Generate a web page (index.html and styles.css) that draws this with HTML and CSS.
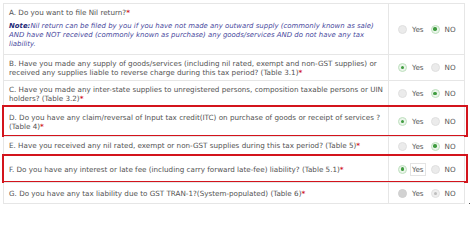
FILE: index.html
```html
<!DOCTYPE html>
<html>
<head>
<meta charset="utf-8">
<link rel="stylesheet" href="styles.css">
</head>
<body>
<div class="table">
  <div class="row row-a">
    <div class="q">
      <div class="qt">A. Do you want to file Nil return?<span class="req">*</span></div>
      <div class="note"><b>Note:</b>Nil return can be filed by you if you have not made any outward supply (commonly known as sale)<br>AND have NOT received (commonly known as purchase) any goods/services AND do not have any tax<br>liability.</div>
    </div>
    <div class="opts">
      <span class="radio"></span><span class="lbl">Yes</span>
      <span class="radio on"></span><span class="lbl">NO</span>
    </div>
  </div>
  <div class="row row-b">
    <div class="q"><div class="qt">B. Have you made any supply of goods/services (including nil rated, exempt and non-GST supplies) or<br>received any supplies liable to reverse charge during this tax period? (Table 3.1)<span class="req">*</span></div></div>
    <div class="opts">
      <span class="radio on"></span><span class="lbl">Yes</span>
      <span class="radio"></span><span class="lbl">NO</span>
    </div>
  </div>
  <div class="row row-c">
    <div class="q"><div class="qt">C. Have you made any inter-state supplies to unregistered persons, composition taxable persons or UIN<br>holders? (Table 3.2)<span class="req">*</span></div></div>
    <div class="opts">
      <span class="radio"></span><span class="lbl">Yes</span>
      <span class="radio on"></span><span class="lbl">NO</span>
    </div>
  </div>
  <div class="row row-d flagged">
    <div class="q"><div class="qt">D. Do you have any claim/reversal of Input tax credit(ITC) on purchase of goods or receipt of services ?<br>(Table 4)<span class="req">*</span></div></div>
    <div class="opts">
      <span class="radio on"></span><span class="lbl">Yes</span>
      <span class="radio"></span><span class="lbl">NO</span>
    </div>
  </div>
  <div class="row row-e">
    <div class="q"><div class="qt">E. Have you received any nil rated, exempt or non-GST supplies during this tax period? (Table 5)<span class="req">*</span></div></div>
    <div class="opts">
      <span class="radio"></span><span class="lbl">Yes</span>
      <span class="radio on"></span><span class="lbl">NO</span>
    </div>
  </div>
  <div class="row row-f flagged">
    <div class="q"><div class="qt">F. Do you have any interest or late fee (including carry forward late-fee) liability? (Table 5.1)<span class="req">*</span></div></div>
    <div class="opts">
      <span class="radio on"></span><span class="lbl focus">Yes</span>
      <span class="radio"></span><span class="lbl">NO</span>
    </div>
  </div>
  <div class="row row-g">
    <div class="q"><div class="qt">G. Do you have any tax liability due to GST TRAN-1?(System-populated) (Table 6)<span class="req">*</span></div></div>
    <div class="opts">
      <span class="radio dis"></span><span class="lbl">Yes</span>
      <span class="radio dis-on"></span><span class="lbl">NO</span>
    </div>
  </div>
  <span class="scrollmark"></span>
</div>
</body>
</html>
```

FILE: styles.css
```css
html, body {
  margin: 0;
  padding: 0;
  background: #ffffff;
}
body {
  font-family: "DejaVu Sans", Verdana, sans-serif;
  font-size: 7.2px;
  color: #525252;
}
.table {
  position: relative;
  margin: 3px 0 0 3px;
  width: 462px;
  border: 1px solid #e6e6e6;
  box-sizing: border-box;
}
.row {
  position: relative;
  display: flex;
  border-top: 1px solid #e6e6e6;
}
.row:first-child {
  border-top: none;
}
.q {
  flex: 1;
  padding: 4px 5px 3px 5px;
  line-height: 9px;
}
.qt {
  white-space: nowrap;
}
.req {
  color: #d0121b;
  font-weight: bold;
}
.note {
  margin-top: 5px;
  font-size: 6.95px;
  font-style: italic;
  color: #4a4a9e;
  white-space: nowrap;
}
.note b {
  color: #1e2a78;
}
.row-a .q { padding-top: 4px; padding-bottom: 5px; }
.row-b .q { padding-top: 4px; padding-bottom: 3px; }
.row-c .q { padding-top: 4px; padding-bottom: 3px; }
.row-d .q { padding-top: 6px; padding-bottom: 5px; }
.row-e .q { padding-top: 4px; padding-bottom: 5px; }
.row-f .q { padding-top: 9px; padding-bottom: 8px; }
.row-g .q { padding-top: 6px; padding-bottom: 5px; }

.opts {
  width: 76px;
  flex: none;
  border-left: 1px solid #e6e6e6;
  display: flex;
  align-items: center;
  padding-left: 9px;
  box-sizing: border-box;
}
.radio {
  width: 9px;
  height: 9px;
  border-radius: 50%;
  background: #ebebeb;
  box-sizing: border-box;
  border: 1px solid #e0e0e0;
  display: inline-flex;
  align-items: center;
  justify-content: center;
  flex: none;
}
.radio.on {
  background: #eaf5ea;
  border-color: #bfe0bf;
}
.radio.on::after {
  content: "";
  width: 3.5px;
  height: 3.5px;
  border-radius: 50%;
  background: #3f9c3f;
}
.radio.dis {
  background: #d2d2d2;
  border-color: #cfcfcf;
}
.radio.dis-on {
  background: #eeeeee;
  border-color: #e2e2e2;
}
.radio.dis-on::after {
  content: "";
  width: 3px;
  height: 3px;
  border-radius: 50%;
  background: #bdbdbd;
}
.lbl {
  margin-left: 5px;
  margin-right: 7px;
  color: #555555;
  line-height: 9px;
}
.lbl.focus {
  outline: 1px solid #e4e4e4;
  outline-offset: 1px;
}
.flagged::after {
  content: "";
  position: absolute;
  left: -2px;
  right: -4px;
  top: -2px;
  bottom: -1px;
  border: 2px solid #d3141c;
  pointer-events: none;
}
.scrollmark {
  position: absolute;
  right: -6px;
  bottom: -8px;
  width: 1px;
  height: 8px;
  background: #555555;
}
```
